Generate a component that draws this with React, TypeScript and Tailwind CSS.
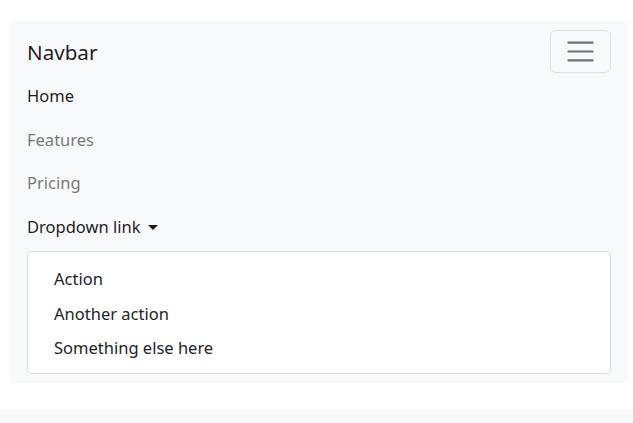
import React from "react";

export default function App() {
  return (
    <div className="w-[633px] h-[423px] overflow-hidden bg-white" style={{ fontFamily: '"Noto Sans", "Segoe UI", sans-serif' }}>
      <div className="pt-[21px]">
        <nav className="ml-[10px] mr-[4px] bg-[#f8f9fa] pl-[17px] pr-[18px] py-[9px]">
          <div className="flex items-center justify-between h-[43px]">
            <a className="text-[20.6px] leading-[43px] text-black/90 mt-[2px]">Navbar</a>
            <button className="w-[61px] h-[43px] rounded-[6px] border border-black/10 flex items-center justify-center">
              <svg width="33" height="33" viewBox="0 0 30 30">
                <path d="M4 7h22M4 15h22M4 23h22" stroke="rgba(0,0,0,0.55)" strokeWidth="2" strokeLinecap="round" strokeMiterlimit="10" />
              </svg>
            </button>
          </div>
          <ul className="flex flex-col text-[16.5px]">
            <li className="h-[43.6px] flex items-center text-black/90 pt-[3px]">Home</li>
            <li className="h-[43.6px] flex items-center text-black/55 pt-[3px]">Features</li>
            <li className="h-[43.6px] flex items-center text-black/55 pt-[3px]">Pricing</li>
            <li className="h-[43.6px] flex items-center text-black/90 pt-[3px]">
              Dropdown link
              <span className="ml-[8px] inline-block w-0 h-0 border-t-[5px] border-t-black/90 border-x-[5px] border-x-transparent" />
            </li>
          </ul>
          <div className="mt-[4px] h-[123px] rounded-[5px] border border-black/15 bg-white pt-[10px] pb-[6px] text-[16.5px] text-[#212529]">
            <div className="h-[34.6px] flex items-center pl-[26px]">Action</div>
            <div className="h-[34.6px] flex items-center pl-[26px]">Another action</div>
            <div className="h-[34.6px] flex items-center pl-[26px]">Something else here</div>
          </div>
        </nav>
        <div className="mt-[27px] h-[20px] bg-[#f8f9fa]" />
      </div>
    </div>
  );
}
